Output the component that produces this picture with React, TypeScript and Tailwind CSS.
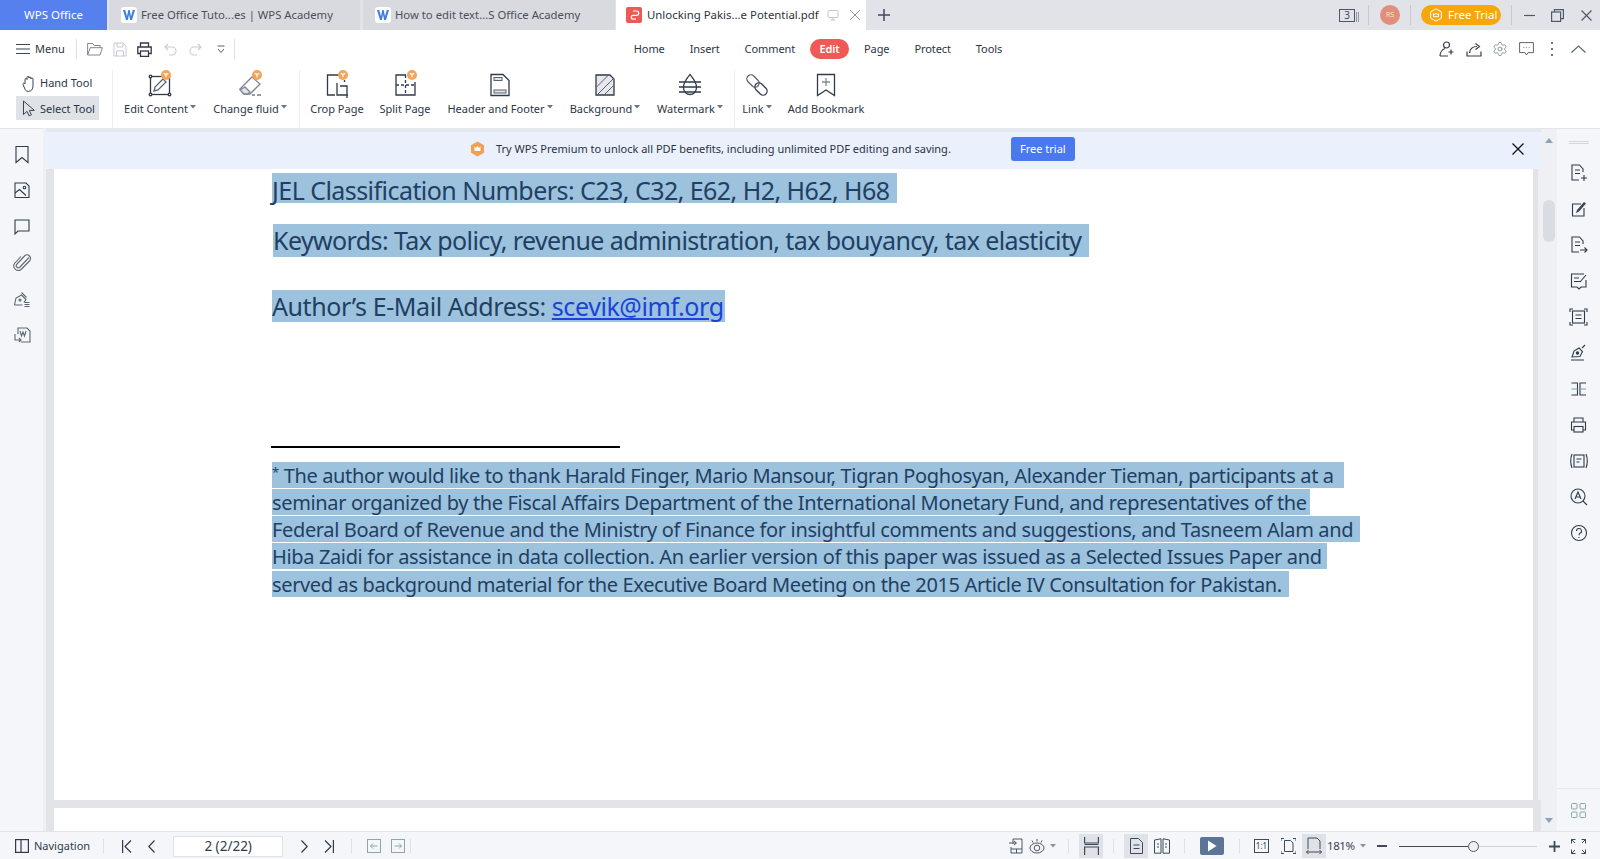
import React from "react";
import { Settings } from "lucide-react";

type IconProps = { w?: number; h?: number; c?: string; sw?: number; children?: React.ReactNode };

const Ico = ({ w = 20, h = 20, c = "#2f3b4d", sw = 1.2, children }: IconProps) => (
  <svg width={w} height={h} viewBox={`0 0 ${w} ${h}`} fill="none" stroke={c} strokeWidth={sw} className="shrink-0">
    {children}
  </svg>
);

const Badge = ({ x, y }: { x: number; y: number }) => (
  <g>
    <circle cx={x} cy={y} r={5} fill="#f3a45c" stroke="none" />
    <path d={`M${x - 2.2} ${y - 1.6}l2.2 1.2 2.2-1.2M${x} ${y - 0.4}v2.6`} stroke="#fff" strokeWidth={1.2} />
  </g>
);

const Caret = ({ c = "#6b7480" }: { c?: string }) => (
  <svg width="6" height="4" viewBox="0 0 6 4" className="shrink-0">
    <path d="M0 0h6L3 3.5z" fill={c} />
  </svg>
);

const VSep = ({ h = "h-[20px]", c = "bg-[#dfe1e5]", m = "" }: { h?: string; c?: string; m?: string }) => (
  <div className={`w-px shrink-0 ${h} ${c} ${m}`} />
);

const WpsLogo = () => (
  <div className="w-[16px] h-[16px] rounded-[3px] bg-white flex items-center justify-center shrink-0">
    <svg width="12" height="10" viewBox="0 0 12 10">
      <path d="M0 0h2.2L4 6.200 5.300 0h1.400L8 6.200 9.800 0H12L9 10H7.200L6 4.600 4.800 10H3z" fill="#3f7fe0" />
    </svg>
  </div>
);

function Tab({ label, w, mr }: { label: string; w: string; mr: string }) {
  return (
    <div className={`${w} ${mr} h-full bg-[#d9dadf] flex items-center pl-[12px] gap-[4px] text-[11.3px] text-[#4a4f58] whitespace-nowrap`}>
      <WpsLogo />
      <span>{label}</span>
    </div>
  );
}

function TitleBar() {
  return (
    <div className="h-[30px] flex bg-[#e1e3e8] shrink-0">
      <div className="w-[107px] mr-[2px] h-full bg-[#5580ee] text-white text-[11.5px] flex items-center justify-center">WPS Office</div>
      <Tab label="Free Office Tuto...es | WPS Academy" w="w-[251px]" mr="mr-[3px]" />
      <Tab label="How to edit text...S Office Academy" w="w-[252px]" mr="mr-[1px]" />
      <div className="w-[250px] h-full bg-white flex items-center pl-[10px] text-[11.4px] text-[#2d333c] whitespace-nowrap">
        <div className="w-[16px] h-[16px] rounded-[2px] bg-[#ec5a55] flex items-center justify-center shrink-0">
          <svg width="12" height="12" viewBox="0 0 12 12" fill="none" stroke="#fff" strokeWidth="1.2">
            <path d="M5 2h3.5a2.2 2.2 0 0 1 0 4.4H5.2a1.9 1.9 0 0 0 0 3.8H8" />
          </svg>
        </div>
        <span className="ml-[5px]">Unlocking Pakis...e Potential.pdf</span>
        <div className="ml-[8px]">
          <Ico w={12} h={12} c="#c2c6cc" sw={1}>
            <rect x="1" y="1.5" width="10" height="7" rx="1" />
            <path d="M6 8.5v2.500M3.500 11h5" />
          </Ico>
        </div>
        <div className="ml-[10px]">
          <Ico w={12} h={12} c="#8e959d" sw={1}>
            <path d="M1 1l10 10M11 1L1 11" />
          </Ico>
        </div>
      </div>
      <div className="ml-[12px] flex items-center">
        <Ico w={12} h={12} c="#3e4a5c" sw={1.5}>
          <path d="M6 0v12M0 6h12" />
        </Ico>
      </div>
      <div className="ml-auto flex items-center h-full">
        <div className="flex items-center">
          <div className="w-[16px] h-[13px] border border-[#4b5768] text-[10px] leading-[11px] text-center text-[#3e4a5c]">3</div>
          <Ico w={5} h={13} c="#7a8594" sw={0.8}>
            <path d="M1.500 3v10M3.500 3v10" />
          </Ico>
        </div>
        <VSep h="h-[20px]" c="bg-[#c6c9cf]" m="ml-[8px]" />
        <div className="ml-[11px] w-[20px] h-[20px] rounded-full bg-[#e0907a] text-[7px] leading-[20px] text-center text-[#f6e5c8]">RS</div>
        <VSep h="h-[20px]" c="bg-[#c6c9cf]" m="ml-[10px]" />
        <div className="ml-[10px] w-[80px] h-[20px] rounded-full bg-[#f6a70c] flex items-center pl-[8px] gap-[5px] text-[11.5px] text-white">
          <Ico w={14} h={14} c="#fff" sw={1}>
            <path d="M7 .8l5.300 3v6.400L7 13.200l-5.300-3V3.800z" />
            <path d="M4.500 5.500l1.300 1.200L7 5l1.200 1.700 1.300-1.200v3.200h-5z" />
          </Ico>
          <span>Free Trial</span>
        </div>
        <VSep h="h-[20px]" c="bg-[#c6c9cf]" m="ml-[10px]" />
        <div className="ml-[12px]">
          <Ico w={11} h={11} c="#4d5a6b">
            <path d="M0 5.500h11" />
          </Ico>
        </div>
        <div className="ml-[16px]">
          <Ico w={13} h={13} c="#4d5a6b">
            <rect x="0.6" y="3" width="9" height="9.400" />
            <path d="M3.400 3V.6h9v9H9.600" />
          </Ico>
        </div>
        <div className="ml-[17px] mr-[8px]">
          <Ico w={11} h={11} c="#4d5a6b">
            <path d="M.5.5l10 10M10.500.5l-10 10" />
          </Ico>
        </div>
      </div>
    </div>
  );
}

function QuickBar() {
  return (
    <div className="flex items-center h-full">
      <div className="ml-[16px]">
        <Ico w={14} h={12} c="#3b4656">
          <path d="M0 1.500h14M0 6h14M0 10.500h14" />
        </Ico>
      </div>
      <span className="ml-[5px] text-[11px] text-[#2d3644]">Menu</span>
      <VSep h="h-[20px]" m="ml-[11px]" />
      <div className="ml-[10px]">
        <Ico w={16} h={14} c="#7f8894" sw={1}>
          <path d="M.6 13V1.500h5l1.600 2h6v2.200M.6 13l2.600-7.300h12.200L13 13z" />
        </Ico>
      </div>
      <div className="ml-[10px]">
        <Ico w={14} h={15} c="#c7cbd1" sw={1}>
          <path d="M1 1h9l3 3v10H1z" />
          <path d="M4 1v4h6V1M3.500 14V9h7v5" />
        </Ico>
      </div>
      <div className="ml-[10px]">
        <Ico w={15} h={15} c="#2f3845" sw={1.3}>
          <path d="M3.500 5V1h8v4M3.500 11.500H.8V5h13.400v6.500h-2.700" />
          <rect x="3.500" y="9" width="8" height="5.400" />
        </Ico>
      </div>
      <div className="ml-[12px]">
        <Ico w={13} h={13} c="#c7cbd1" sw={1.1}>
          <path d="M4 1L1 4l3 3M1 4h7a3.800 3.800 0 0 1 0 8H5" />
        </Ico>
      </div>
      <div className="ml-[12px]">
        <Ico w={13} h={13} c="#c7cbd1" sw={1.1}>
          <path d="M9 1l3 3-3 3M12 4H5a3.800 3.800 0 0 0 0 8h3" />
        </Ico>
      </div>
      <div className="ml-[15px]">
        <Ico w={8} h={9} c="#59636f" sw={1}>
          <path d="M.5 1h7M1 4l3 3.500L7 4" />
        </Ico>
      </div>
      <VSep h="h-[20px]" m="ml-[9px]" />
    </div>
  );
}

function MenuTabs() {
  const cls = "px-[5px] text-[#2d3644]";
  return (
    <div className="ml-[394px] flex items-center gap-[15px] tracking-[-0.1px] text-[11px] h-full">
      <span className={cls}>Home</span>
      <span className={cls}>Insert</span>
      <span className={cls}>Comment</span>
      <span className="w-[39px] h-[20px] -mx-[5px] rounded-full bg-[#ee5a55] text-white font-semibold flex items-center justify-center">Edit</span>
      <span className={cls}>Page</span>
      <span className={cls}>Protect</span>
      <span className={cls}>Tools</span>
    </div>
  );
}

function TopRight() {
  const cell = "w-[26px] flex justify-center";
  return (
    <div className="ml-auto mr-[9px] flex items-center h-full">
      <div className={`${cell} mr-[2px]`}>
        <Ico w={15} h={16} c="#343e4c">
          <circle cx="7.500" cy="4" r="3" />
          <path d="M1 15c0-1 .5-6 5-7.500M1 15h8M12 8.500v5M9.500 11h5" />
        </Ico>
      </div>
      <div className={cell}>
        <Ico w={16} h={15} c="#343e4c">
          <path d="M1 9.500V14h14V9.500M3.500 11c.5-4 3.500-6.500 7.500-6.500M9.500 1.500l4 3-4 3" />
        </Ico>
      </div>
      <div className={cell}>
        <Settings size={16} strokeWidth={1.3} color="#7d8b90" />
      </div>
      <div className={cell}>
        <Ico w={15} h={14} c="#5d6670" sw={1}>
          <path d="M.6.6h13.800v10H9l-1.500 2.400L6 10.600H.6z" />
          <path d="M4 5.500h1.500M6.800 5.500h1.500M9.600 5.500h1.500" stroke="#a4b0bf" />
        </Ico>
      </div>
      <div className={cell}>
        <Ico w={4} h={14} c="#6d747d" sw={2}>
          <path d="M2 0v2M2 6v2M2 12v2" />
        </Ico>
      </div>
      <div className={cell}>
        <Ico w={15} h={8} c="#5d6670">
          <path d="M.5 7.500L7.500 1l7 6.500" />
        </Ico>
      </div>
    </div>
  );
}

function RibbonItem({ w, label, caret, children }: { w: string; label: string; caret?: boolean; children: React.ReactNode }) {
  return (
    <div className={`${w} shrink-0 flex flex-col items-center`}>
      <div className="h-[28px] flex justify-center">{children}</div>
      <div className="mt-[2px] h-[18px] flex items-center gap-[2px] whitespace-nowrap text-[11px] text-[#2d3644]">
        <span>{label}</span>
        {caret && (
          <span className="mb-[5px]">
            <Caret />
          </span>
        )}
      </div>
    </div>
  );
}

function RibbonSvg({ children }: { children: React.ReactNode }) {
  return (
    <Ico w={30} h={28} c="#303a4a" sw={1.3}>
      {children}
    </Ico>
  );
}

function Ribbon() {
  return (
    <div className="flex-1 flex items-stretch pt-[2px]">
      <div className="w-[112px] shrink-0 pl-[16px] pt-[1px]">
        <div className="h-[24px] flex items-center pl-[6px] text-[11px] text-[#2d3644]">
          <Ico w={14} h={17} c="#3a4454" sw={1}>
            <path d="M3 9V4.500a1 1 0 0 1 2 0V2.500a1 1 0 0 1 2 0v-.5 1a1 1 0 0 1 2 0V4a1 1 0 0 1 2 0v7c0 3-1.500 5.400-4.500 5.400S3.500 15 2.500 13L1 9.500c-.5-1.200 1-2 1.500-1z" />
          </Ico>
          <span className="ml-[4px]">Hand Tool</span>
        </div>
        <div className="mt-px h-[24px] w-[83px] flex items-center pl-[6px] bg-[#dfe2e6] text-[11px] text-[#2d3644]">
          <Ico w={14} h={17} c="#3a4454" sw={1}>
            <path d="M1.500 1v13.500l3.500-3.200 2 4.500 2.400-1-2-4.400h5z" />
          </Ico>
          <span className="ml-[4px] mt-[2px]">Select Tool</span>
        </div>
      </div>
      <VSep h="h-[58px]" c="bg-[#eceef1]" />
      <RibbonItem w="w-[94px]" label="Edit Content" caret>
        <RibbonSvg>
          <rect x="5.500" y="6.500" width="19" height="18" />
          <path d="M9 21l1-4 8-8 3 3-8 8z" stroke="#5b6674" />
          <circle cx="5.500" cy="6.500" r="1.300" fill="#fff" />
          <circle cx="5.500" cy="24.500" r="1.300" fill="#fff" />
          <circle cx="24.500" cy="24.500" r="1.300" fill="#fff" />
          <Badge x={21} y={5} />
        </RibbonSvg>
      </RibbonItem>
      <RibbonItem w="w-[86px]" label="Change fluid" caret>
        <RibbonSvg>
          <path d="M5 19l12-12 8 7-10 10H9z" stroke="#7c8592" />
          <path d="M10 17l5 5-2 2H9l-4-4z" fill="#dfe2e6" stroke="#7c8592" />
          <path d="M17 25h3M22 25h4" strokeWidth={1} />
          <Badge x={22} y={5} />
        </RibbonSvg>
      </RibbonItem>
      <div className="w-[6px]" />
      <VSep h="h-[58px]" c="bg-[#eceef1]" />
      <RibbonItem w="w-[74px]" label="Crop Page">
        <RibbonSvg>
          <path d="M21 5H5.500v20H13" />
          <path d="M22.500 10v2" />
          <path d="M15 13v12h11M18 16h7v12" />
          <Badge x={21} y={5} />
        </RibbonSvg>
      </RibbonItem>
      <RibbonItem w="w-[62px]" label="Split Page">
        <RibbonSvg>
          <path d="M16 5H6v20h19V12" />
          <path d="M15.500 5v20M6 15h19" strokeDasharray="3 2" />
          <Badge x={22} y={5} />
        </RibbonSvg>
      </RibbonItem>
      <RibbonItem w="w-[128px]" label="Header and Footer" caret>
        <RibbonSvg>
          <path d="M6 4.500h12l6 6v15H6z" />
          <rect x="9" y="7.500" width="8" height="3" fill="#dfe2e6" stroke="#59636f" strokeWidth={1} />
          <rect x="9" y="20" width="12" height="3" fill="#dfe2e6" stroke="#59636f" strokeWidth={1} />
        </RibbonSvg>
      </RibbonItem>
      <RibbonItem w="w-[82px]" label="Background" caret>
        <RibbonSvg>
          <path d="M6 5h14l4 4v16H6z" fill="#e6e8ec" />
          <path d="M6.500 17L18 5.500M7 25l17-17M14 25l10-10" stroke="#59636f" strokeWidth={1} />
        </RibbonSvg>
      </RibbonItem>
      <RibbonItem w="w-[88px]" label="Watermark" caret>
        <RibbonSvg>
          <path d="M15 4.500c3 3.500 6.500 7.500 6.500 13a6.500 7 0 0 1-13 0c0-5.500 3.500-9.500 6.500-13z" />
          <path d="M4 12h22M4 17h22M4 22h22" />
        </RibbonSvg>
      </RibbonItem>
      <VSep h="h-[58px]" c="bg-[#eceef1]" />
      <RibbonItem w="w-[44px]" label="Link" caret>
        <RibbonSvg>
          <rect x="4" y="7" width="14" height="8" rx="4" transform="rotate(45 11 11)" stroke="#59636f" />
          <rect x="12" y="15" width="14" height="8" rx="4" transform="rotate(45 19 19)" />
        </RibbonSvg>
      </RibbonItem>
      <RibbonItem w="w-[94px]" label="Add Bookmark">
        <RibbonSvg>
          <path d="M6.500 4.500h17v21l-8.500-5.500-8.500 5.500z" />
          <path d="M15 8v8M11 12h8" stroke="#7e9190" />
        </RibbonSvg>
      </RibbonItem>
    </div>
  );
}

const LEFT_RAIL = [
  <path key="a" d="M4 1.500h12v16l-6-5-6 5z" />,
  <g key="b">
    <path d="M3 2h11l3 3v11.500H3z" />
    <circle cx="12.500" cy="6.500" r="1.300" />
    <path d="M3 12l4.500-3.500 6.500 6" />
  </g>,
  <path key="c" d="M3 3h14v11H6l-3 3z" />,
  <path key="d" stroke="#5c6672" d="M17 4.500L7.500 14.500a2.200 2.200 0 0 1-3-3L12.500 3a3.500 3.500 0 0 1 5 5L9 16.500a4.500 4.500 0 0 1-6.500-6L9 3.500" />,
  <g key="e" stroke="#5c6672">
    <path d="M2.500 16l1.500-7 5.500-3 4.500 4.500-2 3M2.500 16h8M9.500 3.500l5 5" />
    <circle cx="8" cy="11" r="1" />
    <path d="M12.500 13.500h5M12.500 15.500h5M12.500 17.500h5" />
  </g>,
  <g key="f" stroke="#5c6672">
    <path d="M6 9V3h9l3 3v11H9" />
    <path d="M8 6l1.500 5 1.500-4 1.500 4L14 6" />
    <path d="M3 9v6h6M7 13l2 2-2 2" />
  </g>,
];

const RIGHT_RAIL = [
  <g key="a">
    <path d="M14 9V6l-3.500-4H3v15h7" />
    <path d="M6 7h5M6 10.500h5M12 15h6M15 12v6" />
  </g>,
  <g key="b">
    <path d="M15 9v8H3.500V5H12" />
    <path d="M7 14l1-3 7-8 2 1.500-7 8z" fill="#3a4454" stroke="none" />
  </g>,
  <g key="c">
    <path d="M14 9V6l-3.500-4H3v15h7" />
    <path d="M6 7h5M6 10.500h5M11 15h7M15.500 12.500l2.500 2.500-2.500 2.500" />
  </g>,
  <g key="d">
    <path d="M15 3H2.500v13H8l2 2 2-2h5V9" />
    <path d="M5 7h5M5 10.500h7" />
    <path d="M11 11l6-7" />
  </g>,
  <g key="e">
    <path d="M1 5V2h3M15 2h3v3M18 15v3h-3M4 18H1v-3" />
    <rect x="3.500" y="4" width="12" height="12" />
    <path d="M6.500 8h6M6.500 11.500h6" />
  </g>,
  <g key="f">
    <path d="M3 14l2-6 5-3 3.500 3.500-2.500 5z" />
    <circle cx="8.500" cy="10" r="1.200" fill="#2f3b4d" />
    <path d="M13 5l3-3M2 17h13" />
  </g>,
  <g key="g">
    <path d="M2.500 4h6v12h-6M17 4h-6v12h6" />
    <path d="M2.500 10h6M11 10h6" stroke="#7e9c90" />
  </g>,
  <g key="h">
    <path d="M5 7V3h9v4M5 15H2.500V7h14v8H14" />
    <rect x="5" y="11.500" width="9" height="5.500" />
  </g>,
  <g key="i">
    <rect x="5" y="4" width="10" height="12" />
    <path d="M3 3c-1.500 4-1.500 10 0 14M17 3c1.500 4 1.500 10 0 14M7.500 8h5M7.500 11h3" />
  </g>,
  <g key="j">
    <circle cx="9" cy="9" r="7" />
    <path d="M6 12l3-7 3 7M7 10h4M14 14l4 4" />
  </g>,
  <g key="k">
    <circle cx="10" cy="10" r="7.500" />
    <path d="M7.500 8a2.500 2.500 0 1 1 3.500 2.300c-.8.400-1 1-1 2M10 14v1" />
  </g>,
];

const PARA = [
  { text: " The author would like to thank Harald Finger, Mario Mansour, Tigran Poghosyan, Alexander Tieman, participants at a", star: true, w: "w-[1072px]", mt: "" },
  { text: "seminar organized by the Fiscal Affairs Department of the International Monetary Fund, and representatives of the", w: "w-[1038px]", mt: "mt-px" },
  { text: "Federal Board of Revenue and the Ministry of Finance for insightful comments and suggestions, and Tasneem Alam and", w: "w-[1088px]", mt: "mt-px" },
  { text: "Hiba Zaidi for assistance in data collection. An earlier version of this paper was issued as a Selected Issues Paper and", w: "w-[1055px]", mt: "mt-px" },
  { text: "served as background material for the Executive Board Meeting on the 2015 Article IV Consultation for Pakistan.", w: "w-[1017px]", mt: "mt-[2px]" },
];

function DocPage() {
  const doc = "text-[#1f3f63] bg-[#9cc2de] whitespace-pre overflow-visible";
  return (
    <div className="w-[1479px] h-[631px] bg-white pl-[218px] pt-[4px] font-['Noto_Sans',sans-serif]">
      <div className={`${doc} w-[625px] h-[30px] text-[25px] leading-[34px] tracking-[-0.55px]`}>JEL Classification Numbers: C23, C32, E62, H2, H62, H68</div>
      <div className={`${doc} mt-[21px] ml-px w-[816px] h-[33px] text-[25px] leading-[33px] tracking-[-0.6px]`}>Keywords: Tax policy, revenue administration, tax bouyancy, tax elasticity</div>
      <div className={`${doc} mt-[33px] w-[453px] h-[32px] text-[25px] leading-[32px] tracking-[-0.42px]`}>
        Author’s E-Mail Address: <span className="text-[#1a43d8] underline">scevik@imf.org</span>
      </div>
      <div className="mt-[124px] -ml-px w-[349px] h-[2px] bg-black" />
      <div className="mt-[14px]">
        {PARA.map((l) => (
          <div key={l.text} className={`${doc} ${l.w} h-[26px] ${l.mt} text-[20px] leading-[28px] tracking-[-0.36px]`}>
            {l.star && <span className="text-[13px] align-top leading-[20px]">*</span>}
            {l.text}
          </div>
        ))}
      </div>
    </div>
  );
}

function Banner() {
  return (
    <div className="h-[37px] bg-[#eaf1fd] shrink-0 flex items-center pb-[3px] text-[11px] text-[#2b3340]">
      <div className="ml-[424px]">
        <Ico w={15} h={16} c="#f0a155" sw={0}>
          <path d="M7.500.5l6.500 3.700v7.600l-6.500 3.700L1 11.800V4.200z" fill="#f0a155" />
          <path d="M4.500 5.500l1.500 1.500 1.500-2 1.500 2 1.500-1.500V10h-6z" fill="#fff" />
        </Ico>
      </div>
      <span className="ml-[11px]">Try WPS Premium to unlock all PDF benefits, including unlimited PDF editing and saving.</span>
      <div className="ml-[60px] w-[64px] h-[24px] rounded-[3px] bg-[#4a78ee] text-white flex items-center justify-center">Free trial</div>
      <div className="ml-auto mr-[17px]">
        <Ico w={12} h={12} c="#111" sw={1.3}>
          <path d="M.5.5l11 11M11.500.5l-11 11" />
        </Ico>
      </div>
    </div>
  );
}

function StatusBar() {
  const active = "w-[24px] h-[24px] bg-[#dfe2e6] flex items-center justify-center";
  return (
    <div className="h-[28px] shrink-0 bg-[#f4f6f9] border-t border-[#e2e4e8] pt-px flex items-center text-[11px] text-[#2f3b4d]">
      <div className="ml-[15px]">
        <Ico w={14} h={14} c="#2f3b4d">
          <rect x=".6" y=".6" width="12.800" height="12.800" />
          <path d="M6 .6v12.800" />
        </Ico>
      </div>
      <span className="ml-[5px]">Navigation</span>
      <VSep h="h-[14px]" m="ml-[13px]" />
      <div className="ml-[18px]">
        <Ico w={10} h={13}>
          <path d="M.6 0v13M9 .5L3 6.500l6 6" />
        </Ico>
      </div>
      <div className="ml-[16px]">
        <Ico w={7} h={13}>
          <path d="M6.500.5L.8 6.500l5.700 6" />
        </Ico>
      </div>
      <div className="ml-[18px] w-[110px] h-[21px] bg-white border border-[#dfe1e5] rounded-[1px] flex items-center justify-center text-[13.5px]">2 (2/22)</div>
      <div className="ml-[18px]">
        <Ico w={7} h={13}>
          <path d="M.5.5l5.700 6-5.700 6" />
        </Ico>
      </div>
      <div className="ml-[16px]">
        <Ico w={10} h={13}>
          <path d="M9.400 0v13M1 .5l6 6-6 6" />
        </Ico>
      </div>
      <VSep h="h-[14px]" m="ml-[17px]" />
      <div className="ml-[15px]">
        <Ico w={14} h={14} c="#8fa7a0" sw={1}>
          <rect x=".5" y=".5" width="13" height="13" />
          <path d="M10.500 7h-7M6 4.500L3.500 7 6 9.500" />
        </Ico>
      </div>
      <div className="ml-[10px]">
        <Ico w={14} h={14} c="#8fa7a0" sw={1}>
          <rect x=".5" y=".5" width="13" height="13" />
          <path d="M3.500 7h7M8 4.500L10.500 7 8 9.500" />
        </Ico>
      </div>
      <VSep h="h-[14px]" m="ml-[5px]" />
      <div className="ml-auto flex items-center h-full">
        <Ico w={14} h={16} c="#4d5867" sw={1}>
          <path d="M4 6V1h9v14H2V9M0 5h7M5 3l2.500 2L5 7M2 11h11M7.500 11v4" />
        </Ico>
        <div className="ml-[6px]">
          <Ico w={16} h={16} c="#4d5867" sw={1}>
            <ellipse cx="8" cy="10" rx="7" ry="5" />
            <circle cx="8" cy="10" r="2.800" />
            <path d="M8 1v2.500M3 2.500l1 2M13 2.500l-1 2" />
          </Ico>
        </div>
        <div className="ml-[5px]">
          <Caret c="#8a929c" />
        </div>
        <VSep h="h-[14px]" m="ml-[12px]" />
        <div className={`ml-[10px] ${active}`}>
          <Ico w={15} h={18} c="#3e4a5c">
            <path d="M.6 0v6h13.800V0M.6 18v-8h13.800v8M.6 7.500h13.800" />
          </Ico>
        </div>
        <VSep h="h-[14px]" m="ml-[10px]" />
        <div className={`ml-[10px] ${active}`}>
          <Ico w={13} h={16} c="#3e4a5c" sw={1}>
            <path d="M.5.5h8l4 4v11H.5z" />
            <path d="M3.500 7h6M3.500 10.500h6" />
          </Ico>
        </div>
        <div className="ml-[6px]">
          <Ico w={16} h={16} c="#3e4a5c" sw={1}>
            <path d="M.5 2L7 .8v14.400H.5zM9 .8L15.500 2v13.200H9z" />
            <path d="M3 6h2M3 9h2M11 6h2M11 9h2" />
          </Ico>
        </div>
        <VSep h="h-[14px]" m="ml-[14px]" />
        <div className="ml-[15px] w-[24px] h-[18px] rounded-[2px] bg-[#5c7596] flex items-center justify-center">
          <svg width="10" height="12" viewBox="0 0 10 12">
            <path d="M1 .5l8.500 5.500L1 11.500z" fill="#fff" />
          </svg>
        </div>
        <VSep h="h-[14px]" m="ml-[15px]" />
        <div className="ml-[14px] w-[15px] h-[14px] border border-[#3e4a5c] text-[8px] leading-[12px] text-center">1:1</div>
        <div className="ml-[12px]">
          <Ico w={15} h={16} c="#3e4a5c" sw={1}>
            <path d="M3.500 2.500h6l2.500 2.500v8.500H3.500z" />
            <path d="M0 3V.5h3M12 .5h3V3M15 13v2.500h-3M3 15.500H0V13" />
          </Ico>
        </div>
        <div className={`ml-[6px] ${active}`}>
          <Ico w={16} h={18} c="#3e4a5c" sw={1}>
            <path d="M2 12V1h9l3 3v8" />
            <path d="M.5 15h15M2.500 13L.5 15l2 2M13.500 13l2 2-2 2" />
          </Ico>
        </div>
        <span className="ml-[1px] w-[28px] text-[11.500px] tracking-[-0.4px] text-[#3a4454]">181%</span>
        <div className="ml-[5px]">
          <Caret c="#8a929c" />
        </div>
        <div className="ml-[11px] w-[10px] h-[2px] bg-[#3e4a5c]" />
        <div className="ml-[12px] w-[138px] flex items-center">
          <div className="w-[69px] h-px bg-[#3e4a5c]" />
          <div className="w-[11px] h-[11px] rounded-full border border-[#4d5867] bg-[#eef0f3] shrink-0" />
          <div className="flex-1 h-px bg-[#cfd3d8]" />
        </div>
        <div className="ml-[12px]">
          <Ico w={11} h={11} c="#3e4a5c" sw={1.8}>
            <path d="M5.500 0v11M0 5.500h11" />
          </Ico>
        </div>
        <div className="ml-[11px] mr-[14px]">
          <Ico w={15} h={15} c="#3e4a5c" sw={1}>
            <path d="M.5 4.500V.5h4M.5.5l3.500 3.500M14.500 4.500V.5h-4M14.500.5L11 4M.5 10.500v4h4M.5 14.500L4 11M14.500 10.500v4h-4M14.500 14.500L11 11" />
          </Ico>
        </div>
      </div>
    </div>
  );
}

export default function App() {
  return (
    <div className="w-[1600px] h-[859px] flex flex-col overflow-hidden bg-white font-['Noto_Sans',sans-serif]">
      <TitleBar />
      <div className="h-[98px] shrink-0 flex flex-col bg-white">
        <div className="h-[38px] shrink-0 flex items-center">
          <QuickBar />
          <MenuTabs />
          <TopRight />
        </div>
        <Ribbon />
      </div>
      <div className="flex-1 min-h-0 flex">
        <div className="w-[43px] shrink-0 bg-[#f4f6f9] border-t border-[#e2e4e8] pt-[16px] flex flex-col items-center gap-[16px]">
          {LEFT_RAIL.map((icon, i) => (
            <Ico key={i} c="#2f3b4d" sw={1.1}>
              {icon}
            </Ico>
          ))}
        </div>
        <div className="w-[1498px] shrink-0 flex flex-col bg-[#e3e4e8] border-l-[3px] border-[#eef0f3]">
          <div className="h-[4px] shrink-0 bg-[#e3e7ee]" />
          <Banner />
          <div className="flex h-[631px] shrink-0 pl-[8px]">
            <DocPage />
            <div className="w-[5px]" />
            <div className="w-[3px] bg-[#eef0f3]" />
          </div>
          <div className="mt-[8px] ml-[8px] w-[1479px] flex-1 bg-white" />
        </div>
        <div className="w-[16px] shrink-0 bg-[#eef0f3] flex flex-col items-center border-t border-[#e2e4e8]">
          <div className="mt-[9px]">
            <svg width="8" height="5" viewBox="0 0 8 5" className="block">
              <path d="M0 5h8L4 0z" fill="#8da3b5" />
            </svg>
          </div>
          <div className="mt-[57px] w-[12px] h-[42px] rounded-[6px] bg-[#d9dce1]" />
          <div className="mt-auto mb-[8px]">
            <svg width="8" height="5" viewBox="0 0 8 5" className="block">
              <path d="M0 0h8L4 5z" fill="#8da3b5" />
            </svg>
          </div>
        </div>
        <div className="w-[43px] shrink-0 bg-[#f4f6f9] border-t border-[#e2e4e8] flex flex-col items-center">
          <div className="mt-[12px] w-[20px] h-[3px] border-y border-[#d3d6db]" />
          <div className="mt-[19px] flex flex-col items-center gap-[16px]">
            {RIGHT_RAIL.map((icon, i) => (
              <Ico key={i} c="#2f3b4d" sw={1.1}>
                {icon}
              </Ico>
            ))}
          </div>
          <div className="mt-auto w-full h-[43px] border-t border-[#e6e8ec] flex items-center justify-center">
            <Ico w={15} h={15} c="#8fa7a0" sw={1}>
              <rect x=".5" y=".5" width="5.500" height="5.500" rx="1" />
              <rect x="9" y=".5" width="5.500" height="5.500" rx="1" />
              <rect x=".5" y="9" width="5.500" height="5.500" rx="1" />
              <rect x="9" y="9" width="5.500" height="5.500" rx="1" />
            </Ico>
          </div>
        </div>
      </div>
      <StatusBar />
    </div>
  );
}
